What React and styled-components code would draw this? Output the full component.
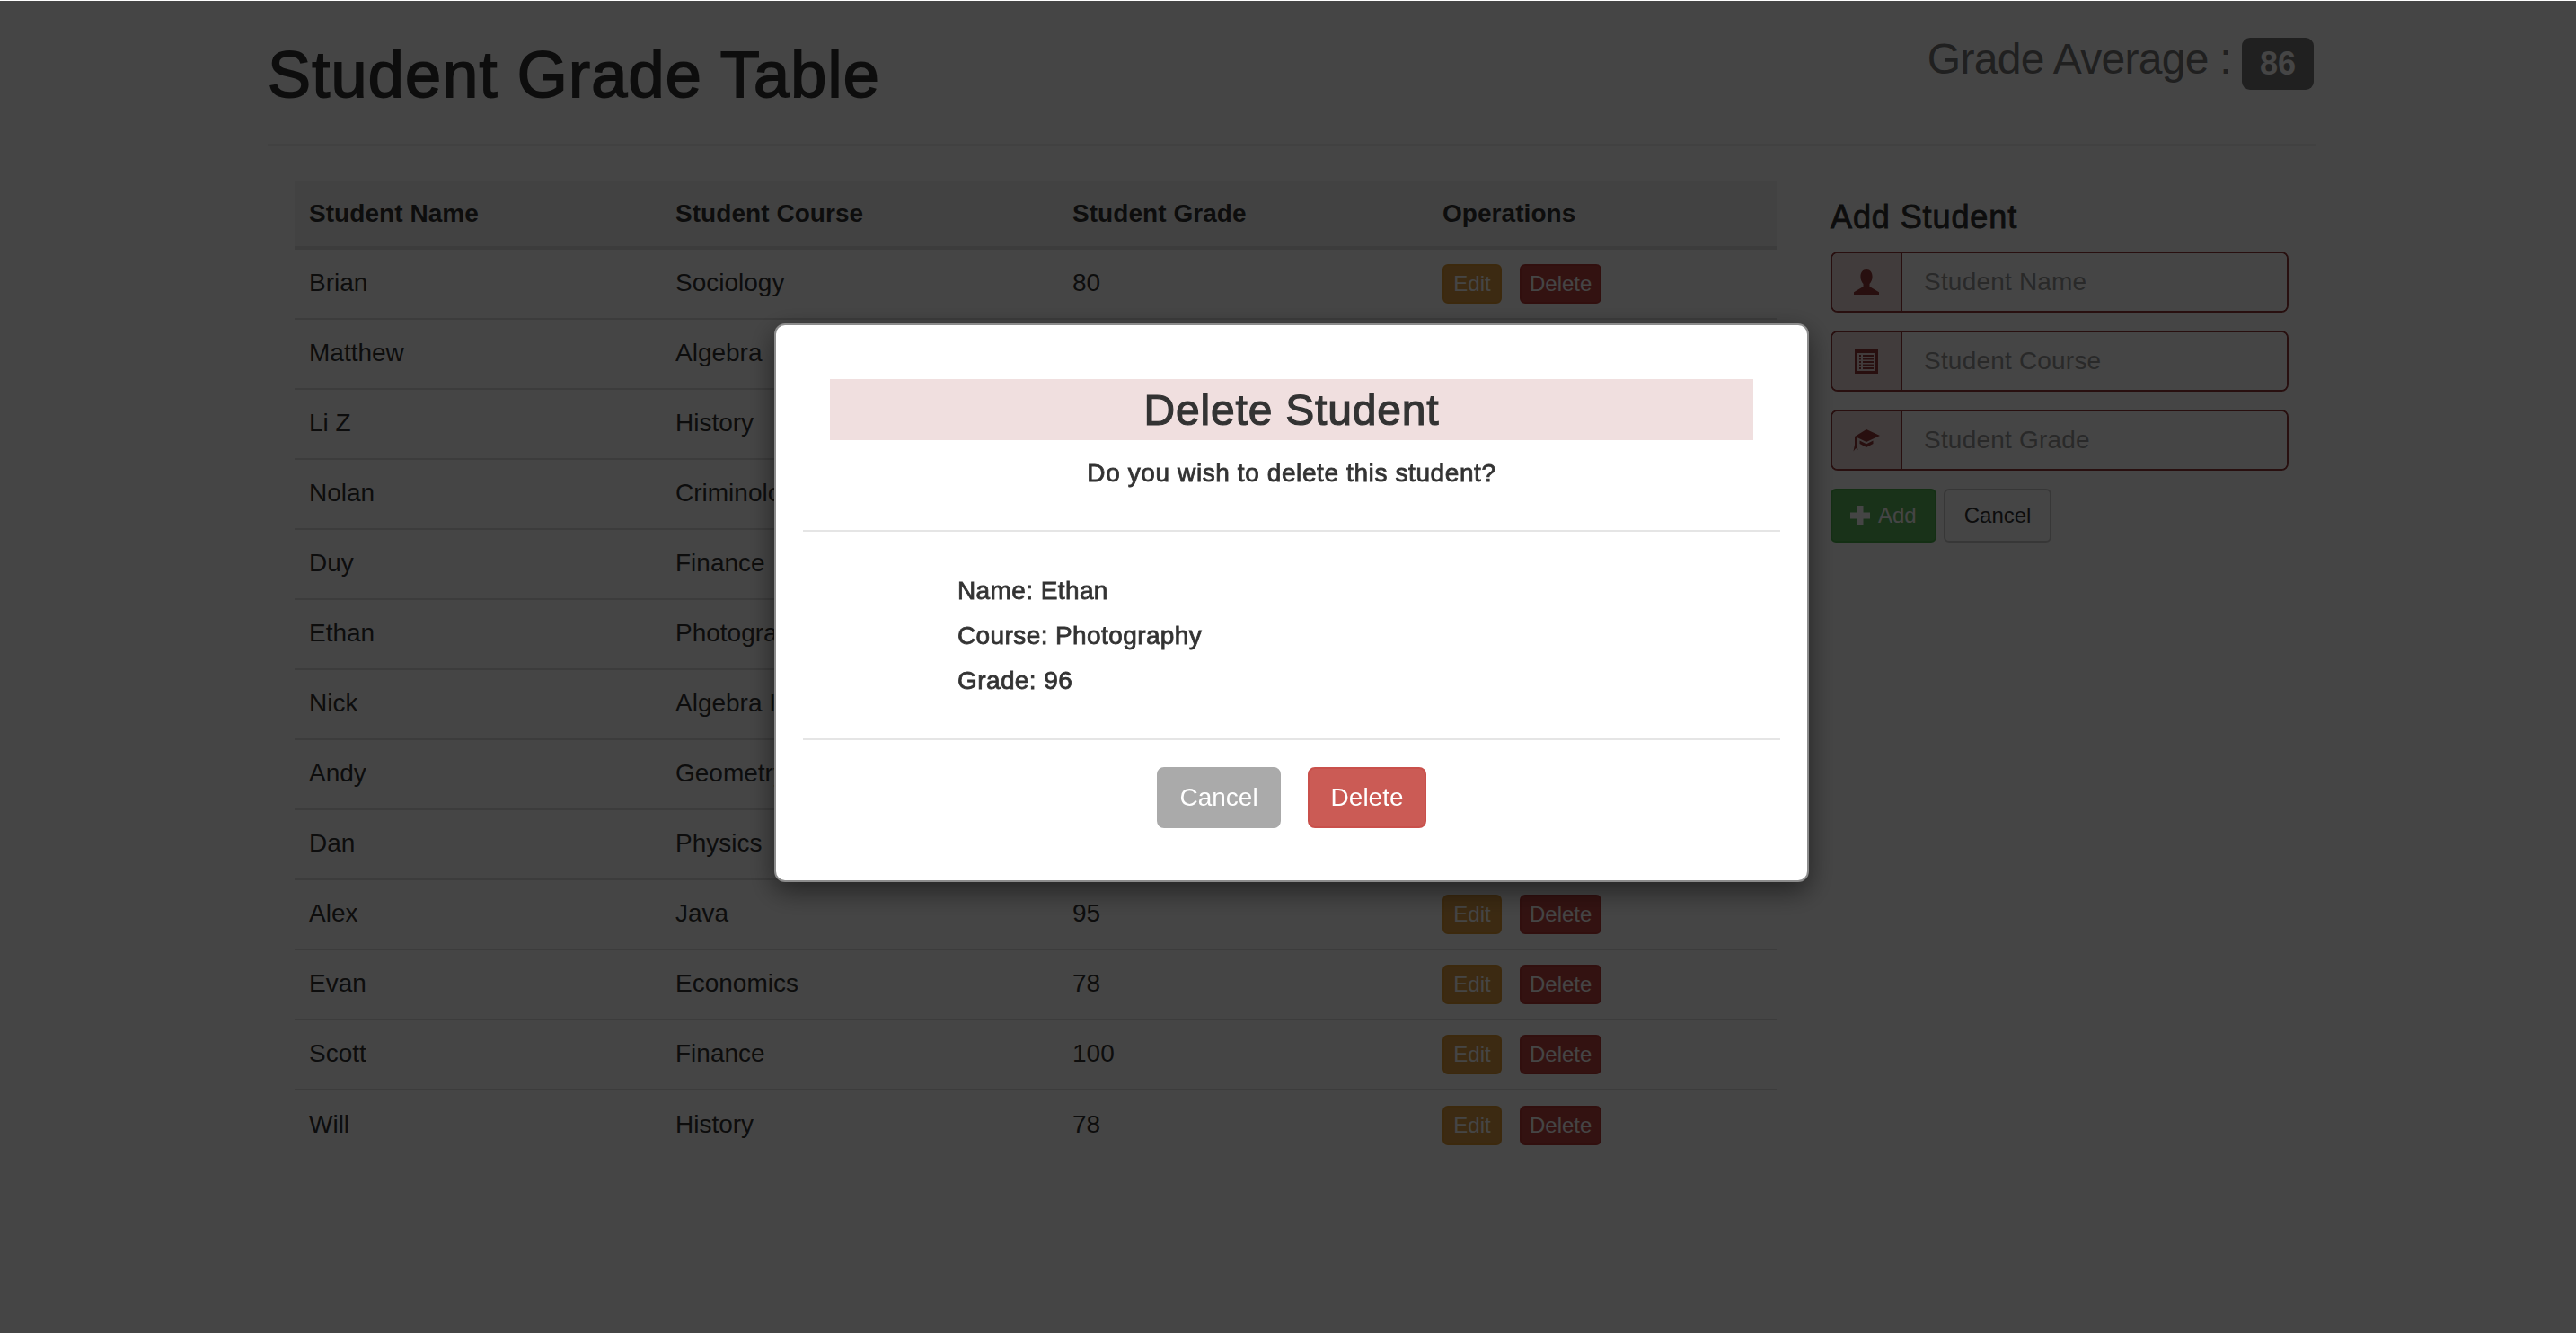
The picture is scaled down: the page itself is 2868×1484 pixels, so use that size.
import React from "react";
import styled, { createGlobalStyle } from "styled-components";

const GlobalStyle = createGlobalStyle`
  html, body {
    margin: 0;
    height: 100%;
    overflow: hidden;
    background: #fff;
  }
  body {
    font-family: "Liberation Sans", Arial, sans-serif;
    font-size: 28px;
    line-height: 40px;
    color: #333;
  }
  * { box-sizing: border-box; }
`;

const students = [
  { name: "Brian", course: "Sociology", grade: 80 },
  { name: "Matthew", course: "Algebra", grade: 92 },
  { name: "Li Z", course: "History", grade: 85 },
  { name: "Nolan", course: "Criminology", grade: 88 },
  { name: "Duy", course: "Finance", grade: 90 },
  { name: "Ethan", course: "Photography", grade: 96 },
  { name: "Nick", course: "Algebra II", grade: 75 },
  { name: "Andy", course: "Geometry", grade: 82 },
  { name: "Dan", course: "Physics", grade: 87 },
  { name: "Alex", course: "Java", grade: 95 },
  { name: "Evan", course: "Economics", grade: 78 },
  { name: "Scott", course: "Finance", grade: 100 },
  { name: "Will", course: "History", grade: 78 },
];

const Page = styled.div`
  width: 2340px;
  margin-left: 268px;
  padding: 0 30px;
`;

const Header = styled.header`
  display: flex;
  justify-content: space-between;
  align-items: flex-start;
  height: 160px;
  padding-right: 2px;
`;

const Title = styled.h1`
  margin: 44px 0 0;
  font-size: 72px;
  line-height: 79px;
  font-weight: 400;
  letter-spacing: 1.2px;
  -webkit-text-stroke: 1.8px #333;
`;

const Average = styled.div`
  display: flex;
  align-items: flex-start;
  gap: 12px;
  margin-top: 39px;
  font-size: 48px;
  line-height: 53px;
  letter-spacing: -0.7px;
  color: #777;
`;

const Badge = styled.span`
  margin-top: 3px;
  width: 80px;
  height: 58px;
  border-radius: 9px;
  background: #777;
  color: #fff;
  font-size: 36px;
  line-height: 58px;
  letter-spacing: 0;
  font-weight: 700;
  text-align: center;
`;

const Divider = styled.hr`
  margin: 0;
  border: 0;
  border-top: 2px solid #eee;
`;

const Content = styled.main`
  display: flex;
  gap: 60px;
  margin: 40px 0 0 30px;
`;

const Table = styled.table`
  width: 1650px;
  flex: none;
  table-layout: fixed;
  border-collapse: separate;
  border-spacing: 0;
`;

const HeadCell = styled.th`
  height: 76px;
  padding: 0 16px;
  background: #f5f5f5;
  border-bottom: 4px solid #ddd;
  text-align: left;
  font-weight: 700;
  letter-spacing: 0.05px;
`;

const Row = styled.tr`
  &:last-child td {
    border-bottom: 0;
  }
`;

const Cell = styled.td`
  height: 78px;
  padding: 0 16px 2px;
  border-bottom: 2px solid #ddd;
`;

const Actions = styled.div`
  display: flex;
  gap: 20px;
  margin-top: 2px;
`;

const SmallButton = styled.button`
  min-width: 66px;
  height: 44px;
  padding: 0 9px;
  border: 2px solid ${(p) => (p.$danger ? "#b53a36" : "#dc9732")};
  border-radius: 6px;
  background: ${(p) => (p.$danger ? "#bd4541" : "#dc9c45")};
  color: #fff;
  font: 24px/36px "Liberation Sans", Arial, sans-serif;
`;

const Aside = styled.aside`
  width: 510px;
  flex: none;
`;

const AsideTitle = styled.h4`
  margin: 20px 0 18px;
  font-size: 36px;
  line-height: 40px;
  font-weight: 400;
  letter-spacing: 0.9px;
  -webkit-text-stroke: 0.9px #333;
`;

const Field = styled.label`
  display: flex;
  height: 68px;
  margin-bottom: 20px;
  border: 2px solid #933a38;
  border-radius: 8px;
  overflow: hidden;
`;

const Addon = styled.span`
  flex: none;
  display: flex;
  align-items: center;
  justify-content: center;
  width: 78px;
  background: #f0dfdf;
  border-right: 2px solid #933a38;
  color: #933a38;
`;

const Input = styled.input`
  flex: 1;
  min-width: 0;
  padding: 0 24px;
  border: 0;
  background: #fff;
  font: 28px "Liberation Sans", Arial, sans-serif;
  letter-spacing: 0.2px;
  &::placeholder {
    color: #999;
    opacity: 1;
  }
`;

const FormButtons = styled.div`
  display: flex;
  gap: 8px;
`;

const FormButton = styled.button`
  display: flex;
  align-items: center;
  justify-content: center;
  gap: 9px;
  height: 60px;
  padding: 0 ${(p) => (p.$primary ? "20px" : "21px")};
  border: 2px solid ${(p) => (p.$primary ? "#4cae4c" : "#ccc")};
  border-radius: 6px;
  background: ${(p) => (p.$primary ? "#5cb85c" : "#fff")};
  color: ${(p) => (p.$primary ? "#fff" : "#333")};
  font: 24px/36px "Liberation Sans", Arial, sans-serif;
`;

const Overlay = styled.div`
  position: fixed;
  inset: 1px 0 0;
  padding: 359px 0 0 862px;
  background: rgba(0, 0, 0, 0.73);
`;

const Modal = styled.div`
  width: 1152px;
  height: 622px;
  padding: 60px 30px 0;
  border: 2px solid #8c8c8c;
  border-radius: 12px;
  background: #fff;
  box-shadow: 0 10px 30px rgba(0, 0, 0, 0.5);
`;

const ModalTitle = styled.h3`
  margin: 0 30px;
  height: 68px;
  background: #f0dfdf;
  font-size: 48px;
  line-height: 70px;
  font-weight: 400;
  letter-spacing: 0.8px;
  text-align: center;
  -webkit-text-stroke: 1.2px #333;
`;

const Prompt = styled.p`
  margin: 17px 0 43px;
  text-align: center;
  font-weight: 400;
  letter-spacing: 0.6px;
  -webkit-text-stroke: 0.8px #333;
`;

const ModalRule = styled.hr`
  margin: 0;
  border: 0;
  border-top: 2px solid #e5e5e5;
`;

const Details = styled.div`
  padding: 41px 0 39px 172px;
`;

const DetailLine = styled.div`
  line-height: 50px;
  letter-spacing: 0.4px;
  -webkit-text-stroke: 0.8px #333;
`;

const ModalButtons = styled.div`
  display: flex;
  justify-content: center;
  gap: 30px;
  padding-top: 30px;
`;

const ModalButton = styled.button`
  height: 68px;
  padding: 0 23.5px;
  border: 2px solid ${(p) => (p.$danger ? "#c9504b" : "#aaa")};
  border-radius: 8px;
  background: ${(p) => (p.$danger ? "#cb5b55" : "#aaa")};
  color: #fff;
  font: 28px/40px "Liberation Sans", Arial, sans-serif;
`;

const UserIcon = () => (
  <svg width="28" height="28" viewBox="0 0 28 28" fill="currentColor">
    <path d="M14 0C9.600 0 7.400 3.400 7.400 8c0 3.400 1.400 6 3.100 8v3L0 25.200V28h28v-2.800L17.500 19v-3c1.700-2 3.100-4.600 3.100-8 0-4.600-2.200-8-6.600-8z" />
  </svg>
);

const ListIcon = () => (
  <svg width="26" height="28" viewBox="0 0 26 28" fill="currentColor">
    <path
      fillRule="evenodd"
      d="M0 0h26v28H0zM3 5v20h20V5zM5 7h2v2H5zM9 7h12v2H9zM5 10.500h2v2H5zM9 10.500h12v2H9zM5 14h2v2H5zM9 14h12v2H9zM5 17.500h2v2H5zM9 17.500h12v2H9zM5 21h2v2H5zM9 21h12v2H9z"
    />
  </svg>
);

const GradIcon = () => (
  <svg width="30" height="25" viewBox="0 0 30 25" fill="currentColor">
    <path d="M15 0l15 7-15 7L4 8.800V17l1.600 6-2.400-2L.5 24.500 2 17V8z" />
    <path d="M7.500 12.500L15 16.300l7.500-3.800V16L15 20l-7.500-4z" />
  </svg>
);

const PlusIcon = () => (
  <svg width="22" height="22" viewBox="0 0 22 22" fill="currentColor">
    <path d="M7.500 0h7v7.500H22v7h-7.500V22h-7v-7.500H0v-7h7.500z" />
  </svg>
);

const fields = [
  { placeholder: "Student Name", icon: <UserIcon /> },
  { placeholder: "Student Course", icon: <ListIcon /> },
  { placeholder: "Student Grade", icon: <GradIcon /> },
];

export default function App() {
  return (
    <>
      <GlobalStyle />
      <Page>
        <Header>
          <Title>Student Grade Table</Title>
          <Average>
            Grade Average :<Badge>86</Badge>
          </Average>
        </Header>
        <Divider />
        <Content>
          <Table>
            <colgroup>
              <col width="408" />
              <col width="442" />
              <col width="412" />
              <col width="388" />
            </colgroup>
            <thead>
              <tr>
                <HeadCell>Student Name</HeadCell>
                <HeadCell>Student Course</HeadCell>
                <HeadCell>Student Grade</HeadCell>
                <HeadCell>Operations</HeadCell>
              </tr>
            </thead>
            <tbody>
              {students.map((s) => (
                <Row key={s.name}>
                  <Cell>{s.name}</Cell>
                  <Cell>{s.course}</Cell>
                  <Cell>{s.grade}</Cell>
                  <Cell>
                    <Actions>
                      <SmallButton>Edit</SmallButton>
                      <SmallButton $danger>Delete</SmallButton>
                    </Actions>
                  </Cell>
                </Row>
              ))}
            </tbody>
          </Table>
          <Aside>
            <AsideTitle>Add Student</AsideTitle>
            {fields.map((f) => (
              <Field key={f.placeholder}>
                <Addon>{f.icon}</Addon>
                <Input placeholder={f.placeholder} />
              </Field>
            ))}
            <FormButtons>
              <FormButton $primary>
                <PlusIcon />
                Add
              </FormButton>
              <FormButton>Cancel</FormButton>
            </FormButtons>
          </Aside>
        </Content>
      </Page>
      <Overlay>
        <Modal>
          <ModalTitle>Delete Student</ModalTitle>
          <Prompt>Do you wish to delete this student?</Prompt>
          <ModalRule />
          <Details>
            <DetailLine>Name: Ethan</DetailLine>
            <DetailLine>Course: Photography</DetailLine>
            <DetailLine>Grade: 96</DetailLine>
          </Details>
          <ModalRule />
          <ModalButtons>
            <ModalButton>Cancel</ModalButton>
            <ModalButton $danger>Delete</ModalButton>
          </ModalButtons>
        </Modal>
      </Overlay>
    </>
  );
}
